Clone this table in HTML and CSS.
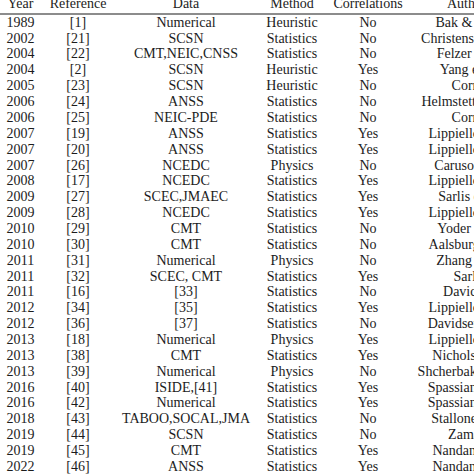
FILE: index.html
```html
<!DOCTYPE html>
<html>
<head>
<meta charset="utf-8">
<link rel="stylesheet" href="styles.css">
</head>
<body>
<div class="table">
  <div class="row head"><span>Year</span><span>Reference</span><span>Data</span><span>Method</span><span>Correlations</span><span>Authors</span></div>
  <div class="rule"></div>
  <div class="row"><span>1989</span><span>[1]</span><span>Numerical</span><span>Heuristic</span><span>No</span><span>Bak &amp; Tang</span></div>
  <div class="row"><span>2002</span><span>[21]</span><span>SCSN</span><span>Statistics</span><span>No</span><span>Christensen et al.</span></div>
  <div class="row"><span>2004</span><span>[22]</span><span>CMT,NEIC,CNSS</span><span>Statistics</span><span>No</span><span>Felzer et al.</span></div>
  <div class="row"><span>2004</span><span>[2]</span><span>SCSN</span><span>Heuristic</span><span>Yes</span><span>Yang et al.</span></div>
  <div class="row"><span>2005</span><span>[23]</span><span>SCSN</span><span>Heuristic</span><span>No</span><span>Corral</span></div>
  <div class="row"><span>2006</span><span>[24]</span><span>ANSS</span><span>Statistics</span><span>No</span><span>Helmstetter et al.</span></div>
  <div class="row"><span>2006</span><span>[25]</span><span>NEIC-PDE</span><span>Statistics</span><span>No</span><span>Corral</span></div>
  <div class="row"><span>2007</span><span>[19]</span><span>ANSS</span><span>Statistics</span><span>Yes</span><span>Lippiello et al.</span></div>
  <div class="row"><span>2007</span><span>[20]</span><span>ANSS</span><span>Statistics</span><span>Yes</span><span>Lippiello et al.</span></div>
  <div class="row"><span>2007</span><span>[26]</span><span>NCEDC</span><span>Physics</span><span>No</span><span>Caruso et al.</span></div>
  <div class="row"><span>2008</span><span>[17]</span><span>NCEDC</span><span>Statistics</span><span>Yes</span><span>Lippiello et al.</span></div>
  <div class="row"><span>2009</span><span>[27]</span><span>SCEC,JMAEC</span><span>Statistics</span><span>Yes</span><span>Sarlis et al.</span></div>
  <div class="row"><span>2009</span><span>[28]</span><span>NCEDC</span><span>Statistics</span><span>Yes</span><span>Lippiello et al.</span></div>
  <div class="row"><span>2010</span><span>[29]</span><span>CMT</span><span>Statistics</span><span>No</span><span>Yoder et al.</span></div>
  <div class="row"><span>2010</span><span>[30]</span><span>CMT</span><span>Statistics</span><span>No</span><span>Aalsburg et al.</span></div>
  <div class="row"><span>2011</span><span>[31]</span><span>Numerical</span><span>Physics</span><span>No</span><span>Zhang et al.</span></div>
  <div class="row"><span>2011</span><span>[32]</span><span>SCEC, CMT</span><span>Statistics</span><span>Yes</span><span>Sarlis</span></div>
  <div class="row"><span>2011</span><span>[16]</span><span>[33]</span><span>Statistics</span><span>No</span><span>Davidsen</span></div>
  <div class="row"><span>2012</span><span>[34]</span><span>[35]</span><span>Statistics</span><span>Yes</span><span>Lippiello et al.</span></div>
  <div class="row"><span>2012</span><span>[36]</span><span>[37]</span><span>Statistics</span><span>No</span><span>Davidsen et al.</span></div>
  <div class="row"><span>2013</span><span>[18]</span><span>Numerical</span><span>Physics</span><span>Yes</span><span>Lippiello et al.</span></div>
  <div class="row"><span>2013</span><span>[38]</span><span>CMT</span><span>Statistics</span><span>Yes</span><span>Nichols et al.</span></div>
  <div class="row"><span>2013</span><span>[39]</span><span>Numerical</span><span>Physics</span><span>No</span><span>Shcherbakov et al.</span></div>
  <div class="row"><span>2016</span><span>[40]</span><span>ISIDE,[41]</span><span>Statistics</span><span>Yes</span><span>Spassiani et al.</span></div>
  <div class="row"><span>2016</span><span>[42]</span><span>Numerical</span><span>Statistics</span><span>Yes</span><span>Spassiani et al.</span></div>
  <div class="row"><span>2018</span><span>[43]</span><span>TABOO,SOCAL,JMA</span><span>Statistics</span><span>No</span><span>Stallone et al.</span></div>
  <div class="row"><span>2019</span><span>[44]</span><span>SCSN</span><span>Statistics</span><span>No</span><span>Zamani</span></div>
  <div class="row"><span>2019</span><span>[45]</span><span>CMT</span><span>Statistics</span><span>Yes</span><span>Nandan et al.</span></div>
  <div class="row"><span>2022</span><span>[46]</span><span>ANSS</span><span>Statistics</span><span>Yes</span><span>Nandan et al.</span></div>
</div>
</body>
</html>
```
FILE: styles.css
```css
html, body {
  margin: 0;
  padding: 0;
  overflow: hidden;
  background: #ffffff;
}
body {
  width: 474px;
  height: 474px;
  font-family: "Liberation Serif", "Times New Roman", serif;
  font-size: 14px;
  color: #1c1c1c;
}
.table {
  margin-top: -3.6px;
  width: 474px;
}
.row {
  display: grid;
  grid-template-columns: 41px 74px 142px 70px 82px 121px;
  line-height: 15.86px;
  height: 15.86px;
  white-space: nowrap;
}
.row > span {
  display: flex;
  justify-content: center;
}
.rule {
  height: 2px;
  margin-top: 0.5px;
  background: #8c8c8c;
}
```
